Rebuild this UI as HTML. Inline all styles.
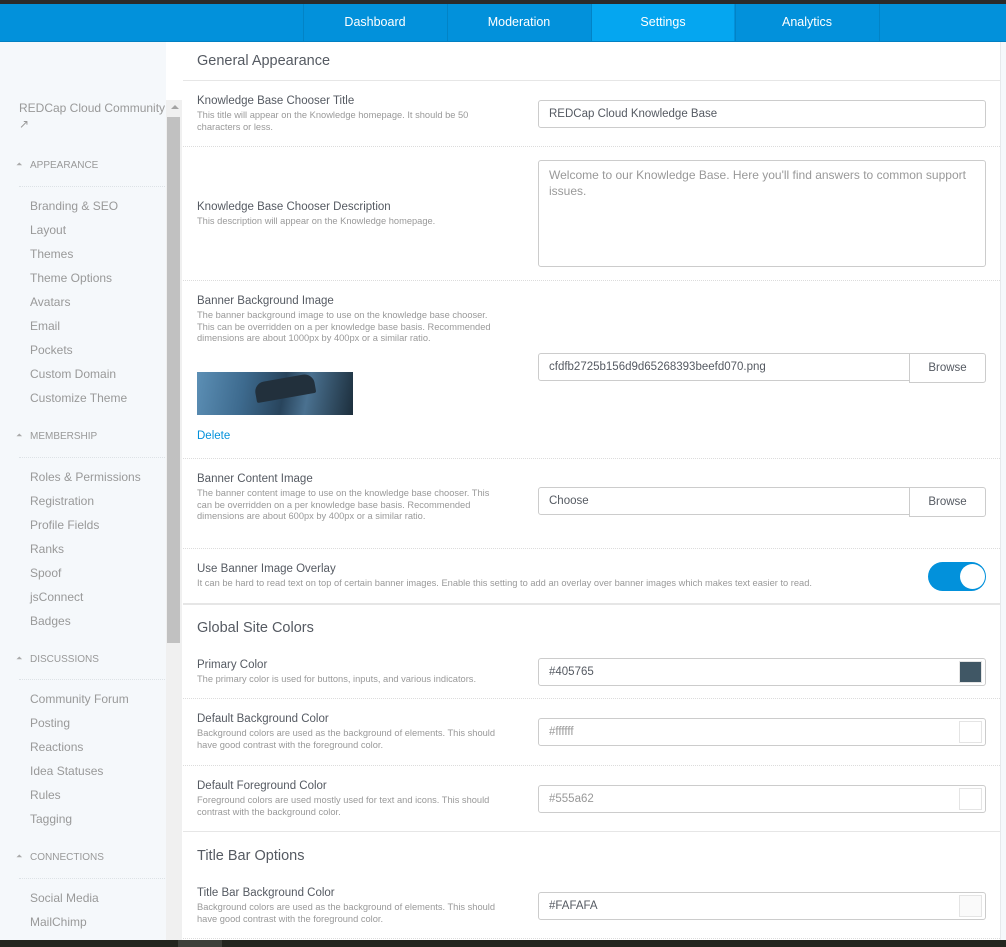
<!DOCTYPE html>
<html><head><meta charset="utf-8"><style>
*{margin:0;padding:0;box-sizing:border-box}
body{width:1006px;height:947px;overflow:hidden;position:relative;background:#fff;font-family:"Liberation Sans",sans-serif}
.a{position:absolute}
.top{left:0;top:0;width:1006px;height:4px;background:#2b2b2b}
.bar{left:0;top:4px;width:1006px;height:38px;background:#0291db;border-bottom:1px solid #0280c2}
.nav{top:4px;height:37px;width:143px;color:#fff;font-size:12.5px;text-align:center;line-height:37px;border-left:1px solid #0283c6}
.side{left:0;top:42px;width:166px;height:898px;background:#f5f8fb}
.track{left:166px;top:100px;width:16px;height:840px;background:#f0f0f0}
.thumb{left:167px;top:117px;width:13px;height:526px;background:#c1c1c1}
.sl{left:30px;font-size:12px;color:#999}
.sh{left:18px;font-size:10px;color:#999;text-transform:uppercase}
.sh:before{content:"";display:inline-block;width:0;height:0;border-top:4px solid #aaa;border-left:4px solid transparent;transform:rotate(-45deg) translateY(-1px);margin-right:8px}
.sd{left:19px;width:146px;border-top:1px dotted #dde2e6}
.main{left:183px;top:42px;width:817px;height:898px;background:#fff}
.rstrip{left:1000px;top:42px;width:6px;height:898px;background:#f5f8fb;border-left:1px solid #e6e9ec}
.t{left:197px;font-size:11.5px;color:#555a62}
.d{left:197px;font-size:9.3px;color:#999;line-height:11.5px;width:300px}
.h{left:197px;font-size:14.5px;color:#555a62}
.dl{left:183px;width:817px;border-top:1px dotted #dcdcdc}
.sl2{left:183px;width:817px;border-top:1px solid #e6e6e6}
.in{left:538px;width:448px;height:28px;border:1px solid #ccc;border-radius:3px;font-size:11.5px;color:#555a62;padding:0 10px;line-height:26px;background:#fff}
.br{left:909px;width:77px;height:30px;border:1px solid #ccc;border-radius:0 3px 3px 0;font-size:11.5px;color:#555a62;text-align:center;line-height:28px;background:#fff}
.sw{left:959px;width:23px;height:22px;border:1px solid #e4e4e4}
</style></head><body>
<div class="a top"></div>
<div class="a bar"></div>
<div class="a nav" style="left:303px">Dashboard</div>
<div class="a nav" style="left:447px">Moderation</div>
<div class="a nav" style="left:591px;background:#05a6f0">Settings</div>
<div class="a nav" style="left:735px">Analytics</div>
<div class="a nav" style="left:879px;width:1px"></div>

<div class="a side"></div>
<div class="a track"></div>
<div class="a" style="left:171px;top:105px;width:0;height:0;border-left:4px solid transparent;border-right:4px solid transparent;border-bottom:4px solid #a3a3a3"></div>
<div class="a thumb"></div>
<div class="a" style="left:19px;top:101px;font-size:12px;color:#999">REDCap Cloud Community</div>
<div class="a" style="left:19px;top:117px;font-size:12px;color:#999">↗</div>

<div class="a sh" style="top:160px">Appearance</div><div class="a sd" style="top:186px"></div>
<div class="a sl" style="top:199px">Branding &amp; SEO</div>
<div class="a sl" style="top:223px">Layout</div>
<div class="a sl" style="top:247px">Themes</div>
<div class="a sl" style="top:271px">Theme Options</div>
<div class="a sl" style="top:295px">Avatars</div>
<div class="a sl" style="top:319px">Email</div>
<div class="a sl" style="top:343px">Pockets</div>
<div class="a sl" style="top:367px">Custom Domain</div>
<div class="a sl" style="top:391px">Customize Theme</div>
<div class="a sh" style="top:431px">Membership</div><div class="a sd" style="top:457px"></div>
<div class="a sl" style="top:470px">Roles &amp; Permissions</div>
<div class="a sl" style="top:494px">Registration</div>
<div class="a sl" style="top:518px">Profile Fields</div>
<div class="a sl" style="top:542px">Ranks</div>
<div class="a sl" style="top:566px">Spoof</div>
<div class="a sl" style="top:590px">jsConnect</div>
<div class="a sl" style="top:614px">Badges</div>
<div class="a sh" style="top:654px">Discussions</div><div class="a sd" style="top:679px"></div>
<div class="a sl" style="top:692px">Community Forum</div>
<div class="a sl" style="top:716px">Posting</div>
<div class="a sl" style="top:740px">Reactions</div>
<div class="a sl" style="top:764px">Idea Statuses</div>
<div class="a sl" style="top:788px">Rules</div>
<div class="a sl" style="top:812px">Tagging</div>
<div class="a sh" style="top:852px">Connections</div><div class="a sd" style="top:878px"></div>
<div class="a sl" style="top:891px">Social Media</div>
<div class="a sl" style="top:915px">MailChimp</div>

<div class="a main"></div>
<div class="a rstrip"></div>

<div class="a h" style="top:53px">General Appearance</div>
<div class="a sl2" style="top:80px"></div>
<div class="a t" style="top:95px">Knowledge Base Chooser Title</div>
<div class="a d" style="top:110px">This title will appear on the Knowledge homepage. It should be 50 characters or less.</div>
<div class="a in" style="top:100px">REDCap Cloud Knowledge Base</div>
<div class="a dl" style="top:146px"></div>
<div class="a t" style="top:201px">Knowledge Base Chooser Description</div>
<div class="a d" style="top:216px;width:330px">This description will appear on the Knowledge homepage.</div>
<div class="a in" style="top:160px;height:107px;line-height:16px;padding:6px 10px 0;color:#999;font-size:12px">Welcome to our Knowledge Base. Here you'll find answers to common support issues.</div>
<div class="a dl" style="top:280px"></div>
<div class="a t" style="top:295px">Banner Background Image</div>
<div class="a d" style="top:310px">The banner background image to use on the knowledge base chooser. This can be overridden on a per knowledge base basis. Recommended dimensions are about 1000px by 400px or a similar ratio.</div>
<div class="a" style="left:197px;top:372px;width:156px;height:43px;background:linear-gradient(100deg,#5c8fb5 0%,#3d6a8e 30%,#28445c 55%,#4a7190 70%,#1c2e3c 100%)"></div>
<div class="a" style="left:255px;top:378px;width:60px;height:20px;background:#22303c;border-radius:10px 10px 2px 2px;transform:rotate(-10deg)"></div>
<div class="a" style="left:197px;top:430px;font-size:11.5px;color:#0291db">Delete</div>
<div class="a in" style="top:353px;width:372px;border-radius:3px 0 0 3px">cfdfb2725b156d9d65268393beefd070.png</div>
<div class="a br" style="top:353px">Browse</div>
<div class="a dl" style="top:458px"></div>
<div class="a t" style="top:473px">Banner Content Image</div>
<div class="a d" style="top:488px">The banner content image to use on the knowledge base chooser. This can be overridden on a per knowledge base basis. Recommended dimensions are about 600px by 400px or a similar ratio.</div>
<div class="a in" style="top:487px;width:372px;border-radius:3px 0 0 3px">Choose</div>
<div class="a br" style="top:487px">Browse</div>
<div class="a dl" style="top:548px"></div>
<div class="a t" style="top:563px">Use Banner Image Overlay</div>
<div class="a d" style="top:578px;width:720px">It can be hard to read text on top of certain banner images. Enable this setting to add an overlay over banner images which makes text easier to read.</div>
<div class="a" style="left:928px;top:562px;width:58px;height:29px;border-radius:15px;background:#0291db"></div>
<div class="a" style="left:960px;top:564px;width:25px;height:25px;border-radius:50%;background:#fff"></div>
<div class="a sl2" style="top:603px;border-top-width:2px"></div>

<div class="a h" style="top:620px">Global Site Colors</div>
<div class="a t" style="top:659px">Primary Color</div>
<div class="a d" style="top:674px;width:400px">The primary color is used for buttons, inputs, and various indicators.</div>
<div class="a in" style="top:658px">#405765</div>
<div class="a sw" style="top:661px;background:#405765"></div>
<div class="a dl" style="top:698px"></div>
<div class="a t" style="top:713px">Default Background Color</div>
<div class="a d" style="top:728px">Background colors are used as the background of elements. This should have good contrast with the foreground color.</div>
<div class="a in" style="top:718px;color:#999">#ffffff</div>
<div class="a sw" style="top:721px;background:#fff"></div>
<div class="a dl" style="top:765px"></div>
<div class="a t" style="top:780px">Default Foreground Color</div>
<div class="a d" style="top:795px">Foreground colors are used mostly used for text and icons. This should contrast with the background color.</div>
<div class="a in" style="top:785px;color:#999">#555a62</div>
<div class="a sw" style="top:788px;background:#fff"></div>
<div class="a sl2" style="top:831px"></div>

<div class="a h" style="top:848px">Title Bar Options</div>
<div class="a t" style="top:887px">Title Bar Background Color</div>
<div class="a d" style="top:902px">Background colors are used as the background of elements. This should have good contrast with the foreground color.</div>
<div class="a in" style="top:892px">#FAFAFA</div>
<div class="a sw" style="top:895px;background:#fafafa"></div>
<div class="a dl" style="top:938px"></div>

<div class="a" style="left:0;top:940px;width:1006px;height:7px;background:#23261f"></div>
<div class="a" style="left:178px;top:940px;width:44px;height:7px;background:#3d403a"></div>
</body></html>
